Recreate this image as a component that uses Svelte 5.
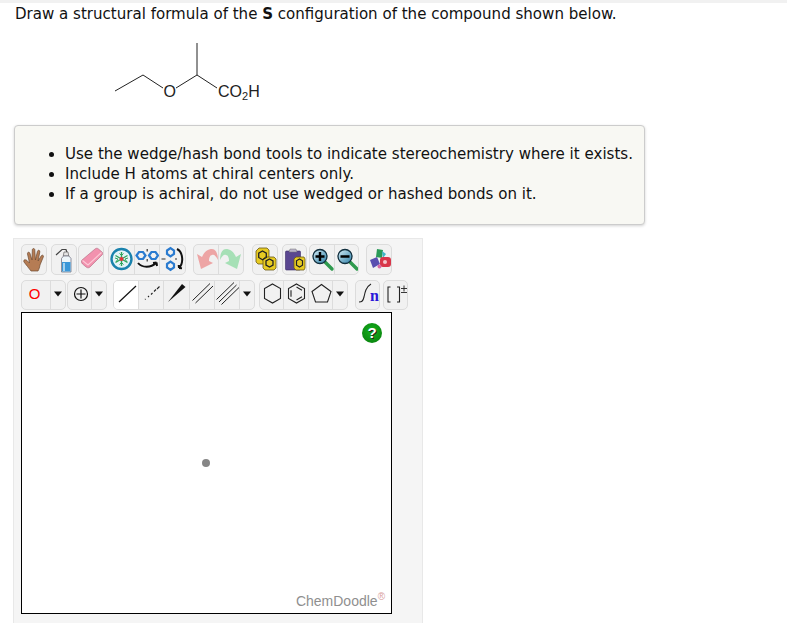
<script>
  const row1 = [
    { gap: 0, width: 26, tools: ['hand'] },
    { gap: 4, width: 26, tools: ['bottle'] },
    { gap: 1, width: 26, tools: ['eraser'] },
    { gap: 4, width: 78, tools: ['wheel', 'flipH', 'flipV'] },
    { gap: 7, width: 51, tools: ['undo', 'redo'] },
    { gap: 8, width: 26, tools: ['copy'] },
    { gap: 4, width: 25, tools: ['paste'] },
    { gap: 2, width: 50, tools: ['zoomIn', 'zoomOut'] },
    { gap: 7, width: 26, tools: ['clean'] }
  ];
  const row2 = [
    { gap: 0, width: 45, tools: ['oxygen', 'more'] },
    { gap: 1, width: 40, tools: ['charge', 'more'] },
    { gap: 6, width: 142, tools: ['single', 'hash', 'wedge', 'double', 'triple', 'more'] },
    { gap: 4, width: 89, tools: ['hexagon', 'benzene', 'pentagon', 'more'] },
    { gap: 7, width: 25, tools: ['repeat'] },
    { gap: 3, width: 25, tools: ['bracket'] }
  ];
</script>

{#snippet icon(name)}
  {#if name === 'more'}
    <svg class="arrow" viewBox="0 0 15 30"><path d="M3 10.500h8l-4 5z" fill="#111" /></svg>
  {:else}
    <svg viewBox="0 0 25 30">
      <defs>
        <linearGradient id="lens" x1="0" y1="0" x2="1" y2="1">
          <stop offset="0" stop-color="#d8eef6" />
          <stop offset="1" stop-color="#2b7fa8" />
        </linearGradient>
      </defs>
      {#if name === 'hand'}
        <path d="M9 26c-2-3-5-6-7-9-1-2 1-3 3-1.500l2.500 2.500L5.500 9c-.4-2 2-2.500 2.500-.5L10 15l.3-10c0-2 2.500-2 2.500 0l.6 10 2-8.500c.5-2 2.800-1.400 2.400.5l-1.700 9 3-5c1-1.600 3-.6 2.200 1L18 20c-.5 3-1 4-2 6z" fill="#b57c54" stroke="#6d4a32" stroke-width=".7" />
      {:else if name === 'bottle'}
        <path d="M4 10L10 4.500h4l1 3" fill="none" stroke="#444" stroke-width="1.200" />
        <path d="M12 7h4l.8 4h-5.500z" fill="#e4e4e4" stroke="#666" stroke-width=".7" />
        <path d="M9.500 13.500l2-2.500h5.500l2 2.500V27H9.500z" fill="#eef6fa" stroke="#667" stroke-width=".7" />
        <rect x="10" y="17" width="8.500" height="9.500" fill="#3a97d8" />
        <rect x="11" y="18" width="2" height="8" fill="#a6d3ef" />
      {:else if name === 'eraser'}
        <path d="M3 15L16 4c1-1 2.500-1 3.500 0L23 7c1 1 1 2 0 3L11 22c-1 1-2.500 1-3.500.3L3.500 19c-1-1-1.500-3-.5-4z" fill="#f291ae" stroke="#b06a80" stroke-width=".6" />
        <path d="M3.500 15.500L9 20 22.500 7.500" fill="none" stroke="#fcc9d6" stroke-width="1.200" />
      {:else if name === 'wheel'}
        <circle cx="12.500" cy="14" r="10" fill="#e4f3f7" stroke="#1a82ad" stroke-width="2.400" />
        <path d="M12.500 7v14M6.500 10.500l12 7M6.500 17.500l12-7" stroke="#2fa35b" stroke-width="1.400" />
        <path d="M10.500 8.500l2 2 2-2M10.500 19.500l2-2 2 2M6 13l3 1-2 3M19 13l-3 1 2 3" fill="none" stroke="#2fa35b" stroke-width="1" />
        <circle cx="12.500" cy="14" r="2" fill="#e2333a" />
      {:else if name === 'flipH'}
        <g fill="none" stroke="#2a7bd0" stroke-width="2.200">
          <path d="M1.500 10.500l2.500-3.500h4l2.500 3.500-2.500 3.500H4z" />
          <path d="M14 10.500l2.500-3.500h4l2.500 3.500-2.500 3.500h-4z" />
        </g>
        <path d="M12.200 4v2.500M12.200 14v2.500" stroke="#333" stroke-width="1.200" />
        <path d="M3 18c4 5 13 5 18 0M21.500 17.500l-3.500.5M21.500 17.500l.5 3.500" fill="none" stroke="#111" stroke-width="2" />
      {:else if name === 'flipV'}
        <g fill="none" stroke="#2a7bd0" stroke-width="2.200">
          <path d="M7 5.500l3.500-2.500 3.500 2.500v3.500l-3.500 2.500L7 9z" />
          <path d="M7 19l3.500-2.500 3.500 2.500v3.500l-3.500 2.500-3.500-2.500z" />
        </g>
        <path d="M1.500 14h4M15 14h2" stroke="#333" stroke-width="1.200" />
        <path d="M17 4c6 3 7 14 2 19M19 23l3 .3M19 23l-.3-3" fill="none" stroke="#111" stroke-width="2" />
      {:else if name === 'undo'}
        <path d="M3 9l5 3c2-5 6-8 10-8s6 5 6 11c-2-4-4-6-6-5-2 0-3 3-3 6l4 2-12 6z" fill="#eda5a5" />
      {:else if name === 'redo'}
        <path d="M3 9l5 3c2-5 6-8 10-8s6 5 6 11c-2-4-4-6-6-5-2 0-3 3-3 6l4 2-12 6z" transform="matrix(-1 0 0 1 25 0)" fill="#a6e0b6" />
      {:else if name === 'copy'}
        <path d="M3 6l3-3h8l2 2v12l-2 2H5l-2-2z" fill="#e7cb22" stroke="#6d5c16" stroke-width=".8" />
        <path d="M12 12h9l2 2v9l-2 2h-9l-2-2v-9z" fill="#e7cb22" stroke="#6d5c16" stroke-width=".8" />
        <path d="M9.500 6l3.800 2.200v4.300l-3.800 2.200-3.800-2.200V8.200zM16.500 14l3.500 2v4l-3.500 2-3.500-2v-4z" fill="none" stroke="#222" stroke-width="1.300" />
      {:else if name === 'paste'}
        <rect x="2.500" y="6" width="15" height="19" rx="1" fill="#5a4791" stroke="#3a2d66" stroke-width=".6" />
        <path d="M6 7l1-3h6l1 3z" fill="#b9b2c9" stroke="#777" stroke-width=".5" />
        <path d="M11 14l2-2h8l1 2v9l-1 2h-8l-2-2z" fill="#e7cb22" stroke="#6d5c16" stroke-width=".8" />
        <path d="M16.500 14l3 1.800v4.400l-3 1.800-3-1.800v-4.400z" fill="none" stroke="#222" stroke-width="1.200" />
      {:else if name === 'zoomIn' || name === 'zoomOut'}
        <path d="M15 17l7 7" stroke="#2f9a4e" stroke-width="3.400" stroke-linecap="round" />
        <circle cx="10" cy="11.500" r="7" fill="url(#lens)" stroke="#12303f" stroke-width="1.300" />
        <path d="M5.500 11.500h9" stroke="#000" stroke-width="2.400" />
        {#if name === 'zoomIn'}
          <path d="M10 7v9" stroke="#000" stroke-width="2.400" />
        {/if}
      {:else if name === 'clean'}
        <path d="M10 4l6 1-1 8-6-1z" fill="#2a9a58" />
        <path d="M15 6l4 3-3 4z" fill="#3db6c6" />
        <path d="M3 15l7-3 3 7-7 4z" fill="#5a4fb0" />
        <rect x="13" y="12" width="11" height="10" rx="3" fill="#d8364a" />
        <circle cx="18" cy="17" r="2" fill="#f4c4cc" />
        <circle cx="12.500" cy="21.500" r="2" fill="#d96aa5" />
      {:else if name === 'oxygen'}
        <text x="12.500" y="18" text-anchor="middle" class="atom">O</text>
      {:else if name === 'charge'}
        <circle cx="13" cy="13" r="6.500" fill="none" stroke="#111" stroke-width="1.200" />
        <path d="M8.500 13h9M13 8.500v9" stroke="#111" stroke-width="1.200" />
      {:else if name === 'single'}
        <path d="M5 21L22 5" stroke="#111" stroke-width="1.200" />
      {:else if name === 'hash'}
        <path d="M6 18.500l.5-.5M9 16l1-1M12 13.500l1.500-1.500M15 10.500l2-2M18 8l2.500-2.500" stroke="#222" stroke-width="1.100" />
      {:else if name === 'wedge'}
        <path d="M4 21L18 3l3.500 3z" fill="#111" />
      {:else if name === 'double'}
        <path d="M2.500 19.500L20 2.500M5.500 22L23 5" stroke="#222" stroke-width="1" />
      {:else if name === 'triple'}
        <path d="M1.500 18.500L19 1.500M4 21L21.500 4M6.500 23.500L24 6.500" stroke="#222" stroke-width="1" />
      {:else if name === 'hexagon' || name === 'benzene'}
        <path d="M12.500 3l8 4.600v9.800l-8 4.600-8-4.600V7.600z" fill="none" stroke="#222" stroke-width="1.100" />
        {#if name === 'benzene'}
          <path d="M12.500 6l5.500 3.200M18 15.800l-5.500 3.200M7 15.800V9.200" fill="none" stroke="#222" stroke-width="1.100" />
        {/if}
      {:else if name === 'pentagon'}
        <path d="M12.500 3.500l9.500 7-3.500 10.500h-12L3 10.500z" fill="none" stroke="#222" stroke-width="1.100" />
      {:else if name === 'repeat'}
        <path d="M3 21c3 0 4-1 5-5 1-5 2-10 7-13" fill="none" stroke="#222" stroke-width="1.100" />
        <text x="14" y="20" class="sub-n">n</text>
      {:else if name === 'bracket'}
        <path d="M6.500 6H4v15h2.500M13 6h2.500v15H13" fill="none" stroke="#222" stroke-width="1.100" />
        <path d="M17 7.500h6M20 4.500v6M17 11.500h6" stroke="#222" stroke-width=".9" fill="none" />
      {/if}
    </svg>
  {/if}
{/snippet}

{#snippet toolbar(groups)}
  <div class="toolbar">
    {#each groups as group}
      <div class="group" style:margin-left="{group.gap}px" style:width="{group.width}px">
        {#each group.tools as tool}
          <button class="tool" class:narrow={tool === 'more'} class:active={tool === 'single'}>
            {@render icon(tool)}
          </button>
        {/each}
      </div>
    {/each}
  </div>
{/snippet}

<div class="strip"></div>
<main>
  <p class="question">Draw a structural formula of the <b>S</b> configuration of the compound shown below.</p>

  <svg class="molecule" width="200" height="70" viewBox="100 37 200 70">
    <path d="M115 91L143 75L163 88M176 88L197 75L217 88M197 75V43" fill="none" stroke="#222" stroke-width="1" />
    <text x="163.500" y="97" class="label">O</text>
    <text x="218" y="97" class="label">CO<tspan dy="3" font-size="11">2</tspan><tspan dy="-3">H</tspan></text>
  </svg>

  <div class="notes">
    <ul>
      <li>Use the wedge/hash bond tools to indicate stereochemistry where it exists.</li>
      <li>Include H atoms at chiral centers only.</li>
      <li>If a group is achiral, do not use wedged or hashed bonds on it.</li>
    </ul>
  </div>

  <section class="sketcher">
    {@render toolbar(row1)}
    {@render toolbar(row2)}
    <div class="canvas">
      <span class="help">?</span>
      <span class="dot"></span>
      <span class="brand">ChemDoodle<sup>®</sup></span>
    </div>
  </section>
</main>

<style>
  :global(body) {
    background: #fff;
  }
  .strip {
    height: 3px;
    background: #f1f1f1;
  }
  main {
    padding: 0 14px;
    font-family: "DejaVu Sans", Verdana, sans-serif;
    font-size: 15.05px;
    color: #111;
  }
  .question {
    margin: 0;
    padding: 2px 0 0 1px;
    line-height: 18px;
  }
  .molecule {
    display: block;
    margin: 14px 0 0 86px;
  }
  .label {
    font-family: "Liberation Sans", Arial, sans-serif;
    font-size: 16px;
    fill: #222;
  }
  .notes {
    box-sizing: border-box;
    width: 631px;
    height: 100px;
    margin-top: 18px;
    padding: 18px 0 0 50px;
    background: #f8f8f3;
    border: 1px solid #ccc;
    border-radius: 4px;
    box-shadow: 0 1px 3px rgba(0, 0, 0, 0.18);
  }
  ul {
    margin: 0;
    padding: 0;
  }
  li {
    line-height: 20px;
    white-space: nowrap;
  }
  .sketcher {
    box-sizing: border-box;
    width: 408px;
    height: 384px;
    margin-top: 14px;
    padding: 5px 0 0 7px;
    background: #f5f5f5;
    outline: 1px solid #e8e8e8;
  }
  .toolbar {
    display: flex;
    height: 31px;
    margin-bottom: 5px;
  }
  .toolbar + .toolbar {
    height: 30px;
    margin-bottom: 2px;
  }
  .group {
    display: flex;
    box-sizing: border-box;
    border: 1px solid #dcdcdc;
    border-radius: 5px;
    background: #f1f1f1;
    overflow: hidden;
  }
  .tool {
    display: block;
    flex: 1 1 0;
    min-width: 0;
    padding: 0;
    border: 0;
    border-left: 1px solid #dcdcdc;
    background: none;
  }
  .tool:first-child {
    border-left: 0;
  }
  .tool.narrow {
    flex: 0 0 15px;
  }
  .tool.active {
    background: #fff;
  }
  .tool svg {
    display: block;
    width: 25px;
    height: 30px;
    overflow: visible;
  }
  .tool svg.arrow {
    width: 15px;
  }
  .atom {
    font-family: "Liberation Sans", Arial, sans-serif;
    font-size: 15px;
    fill: #f00;
  }
  .sub-n {
    font-family: "Liberation Serif", serif;
    font-weight: bold;
    font-size: 16px;
    fill: #2a16d8;
  }
  .canvas {
    position: relative;
    box-sizing: border-box;
    width: 371px;
    height: 302px;
    background: #fff;
    border: 1px solid #000;
  }
  .help {
    position: absolute;
    top: 10px;
    right: 9px;
    width: 20px;
    height: 20px;
    border-radius: 50%;
    background: radial-gradient(circle at 50% 40%, #16b11c, #067a0c);
    color: #fff;
    font: bold 15px/20px "Liberation Sans", Arial, sans-serif;
    text-align: center;
    text-shadow: 1px 1px 0 #222;
  }
  .dot {
    position: absolute;
    left: 180px;
    top: 146px;
    width: 8px;
    height: 8px;
    border-radius: 50%;
    background: #868686;
  }
  .brand {
    position: absolute;
    right: 6px;
    bottom: 4px;
    font: 14px/16px "Liberation Sans", Arial, sans-serif;
    color: #8f8f8f;
  }
  sup {
    font-size: 10px;
    line-height: 0;
    color: #d9a0a0;
  }
</style>
